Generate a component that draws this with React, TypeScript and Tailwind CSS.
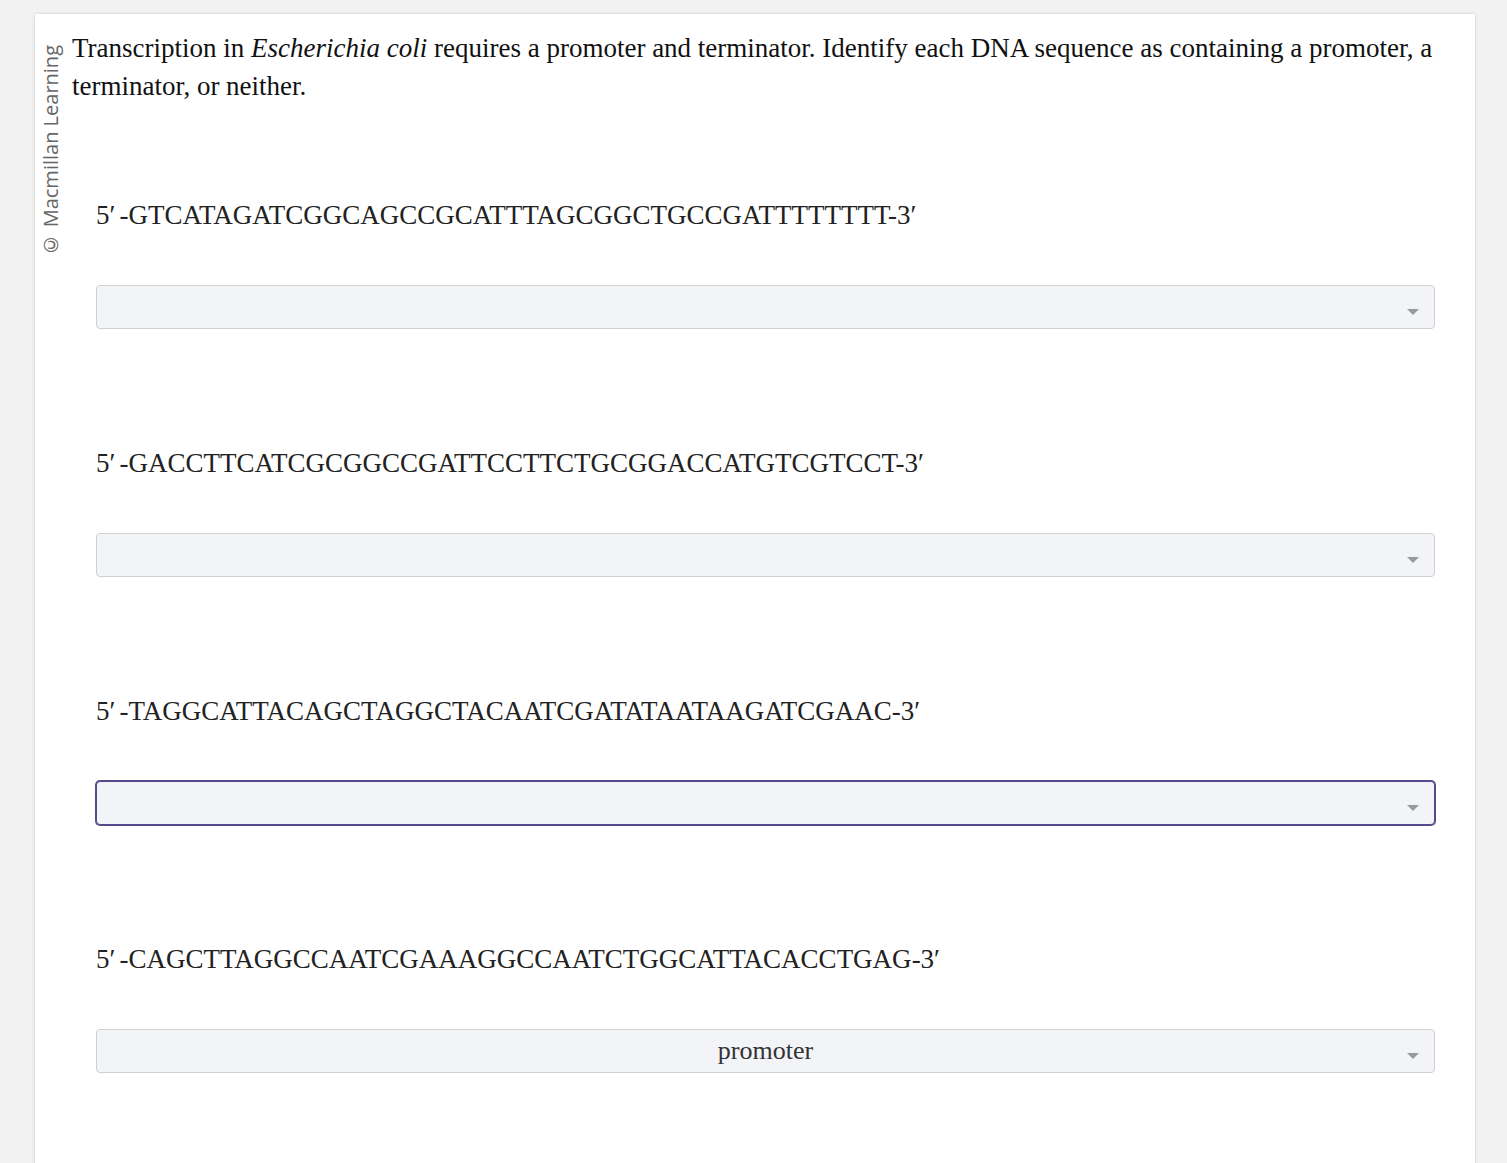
const sequences = [
  { seq: "GTCATAGATCGGCAGCCGCATTTAGCGGCTGCCGATTTTTTTT", value: "", focused: false },
  { seq: "GACCTTCATCGCGGCCGATTCCTTCTGCGGACCATGTCGTCCT", value: "", focused: false },
  { seq: "TAGGCATTACAGCTAGGCTACAATCGATATAATAAGATCGAAC", value: "", focused: true },
  { seq: "CAGCTTAGGCCAATCGAAAGGCCAATCTGGCATTACACCTGAG", value: "promoter", focused: false },
];

const Dropdown = ({ value, focused }: { value: string; focused: boolean }) => (
  <div
    className={`relative h-[44px] w-full rounded-[4px] bg-[#f3f4f8] flex items-center justify-center ${
      focused
        ? "border border-[#554a8c] shadow-[0_0_0_1px_#554a8c]"
        : "border border-[#cfcfcf]"
    }`}
  >
    <span className="text-[26px] leading-none text-[#333]">{value}</span>
    <span className="absolute right-[15px] top-[23px] w-0 h-0 border-l-[6px] border-r-[6px] border-t-[6px] border-l-transparent border-r-transparent border-t-[#999]" />
  </div>
);

export default function App() {
  return (
    <div
      className="min-h-screen bg-[#f2f2f2] pl-[35px] pr-[32px] pt-[14px] text-[#111]"
      style={{ fontFamily: '"Liberation Serif", "Times New Roman", serif' }}
    >
      <div className="bg-white min-h-[1160px] flex shadow-[0_0_3px_rgba(0,0,0,0.18)]">
        <div className="w-[37px] shrink-0 pt-[31px] pl-[5px]">
          <div
            className="[writing-mode:vertical-rl] rotate-180 text-[20px] leading-[22px] text-[#666] whitespace-nowrap"
            style={{ fontFamily: '"Open Sans", "Liberation Sans", Arial, sans-serif' }}
          >
            <span style={{ fontFamily: '"DejaVu Sans", sans-serif' }}>©</span> Macmillan Learning
          </div>
        </div>
        <div className="flex-1 pt-[15px] pr-[40px]">
          <p className="text-[27px] leading-[38px]">
            Transcription in <i>Escherichia coli</i> requires a promoter and terminator. Identify each DNA
            sequence as containing a promoter, a terminator, or neither.
          </p>
          <div className="pl-6 pt-[91px]">
            {sequences.map((s, i) => (
              <div key={i} className="pb-[115px]">
                <div className="text-[27px] leading-[38px] text-[#222]">
                  5<span className="mr-[4px]">′</span>-{s.seq}-3′
                </div>
                <div className="pt-[51px]">
                  <Dropdown value={s.value} focused={s.focused} />
                </div>
              </div>
            ))}
          </div>
        </div>
      </div>
    </div>
  );
}
